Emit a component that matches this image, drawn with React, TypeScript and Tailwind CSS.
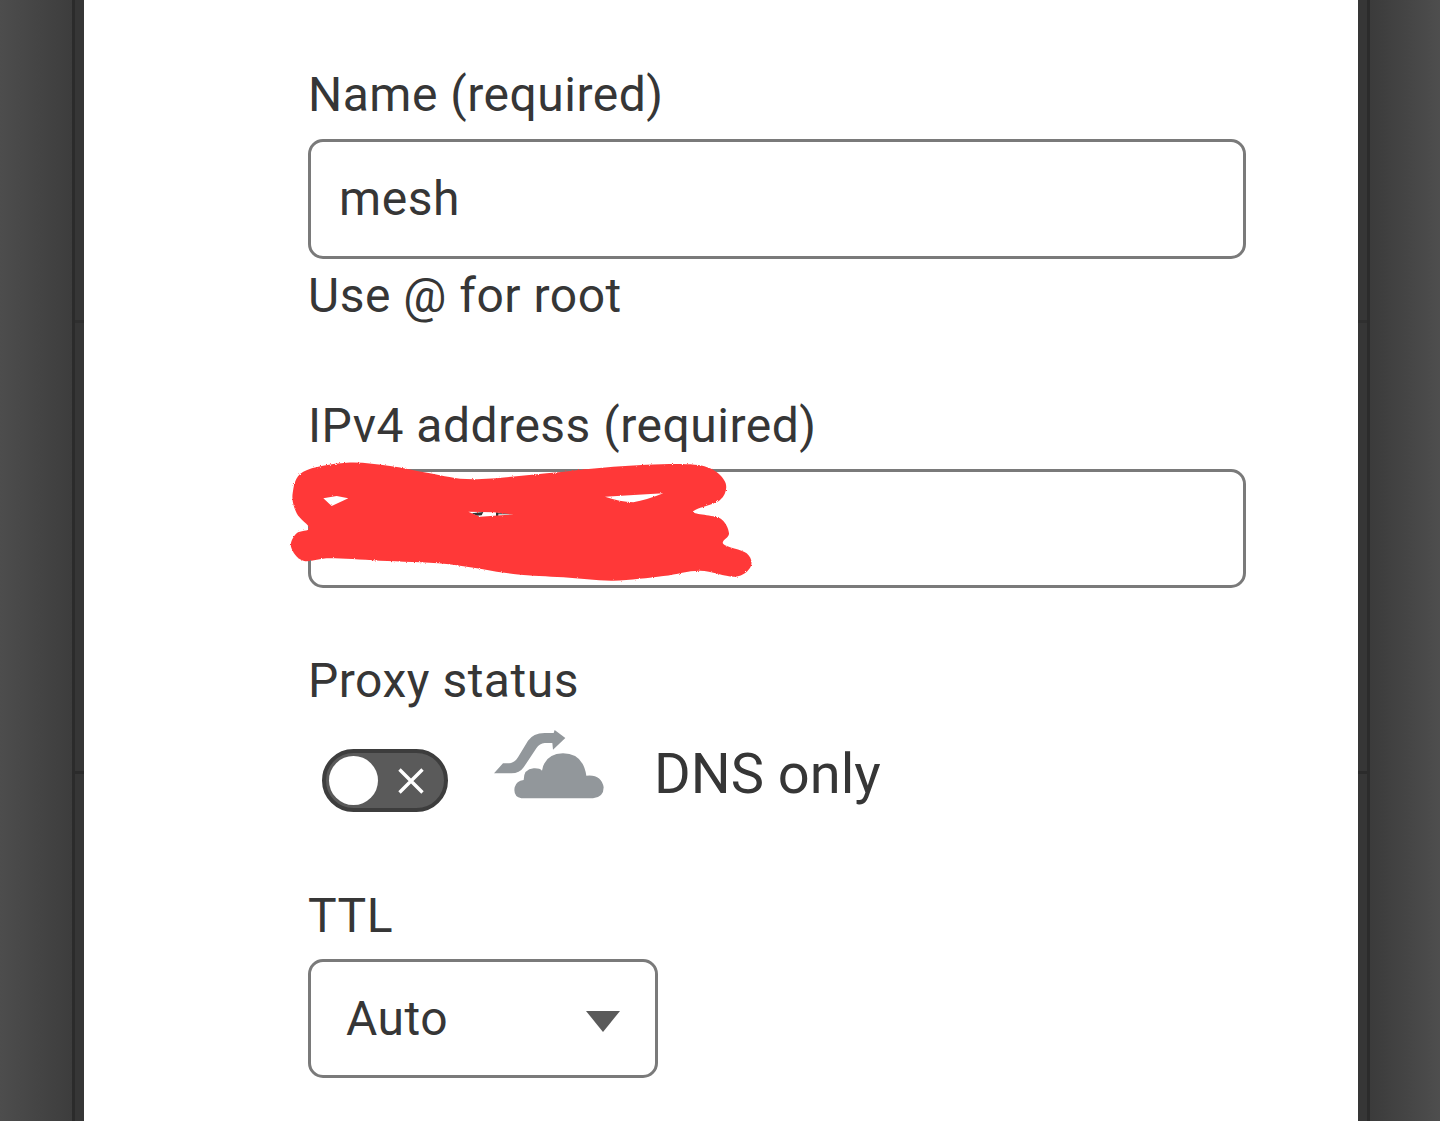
import React from "react";

const pts: number[][] = [[38,130],[70,65],[200,38],[330,48],[450,70],[580,88],[800,70],[1000,50],[1200,42],[1290,55],[1337,100],[1320,150],[1240,185],[1320,205],[1347,250],[1330,282],[1400,310],[1412,350],[1365,380],[1260,362],[1150,378],[1000,392],[850,382],[700,372],[500,342],[300,332],[150,325],[70,332],[33,290],[50,250],[88,235],[50,190]];

function smooth(p: number[][]) {
  const n = p.length;
  let d = `M${p[0][0]} ${p[0][1]}`;
  for (let i = 0; i < n; i++) {
    const a = p[(i - 1 + n) % n], b = p[i], c = p[(i + 1) % n], e = p[(i + 2) % n];
    d += `C${b[0] + (c[0] - a[0]) / 6} ${b[1] + (c[1] - a[1]) / 6} ${c[0] - (e[0] - b[0]) / 6} ${c[1] - (e[1] - b[1]) / 6} ${c[0]} ${c[1]}`;
  }
  return d + "Z";
}

const holes = "M130 145L170 138L205 145L155 168ZM975 140Q1060 135 1150 130Q1100 150 1060 157Q1020 155 975 140ZM565 185L640 187L700 193L600 200Z";

function Scribble() {
  return (
    <svg className="absolute left-[280px] top-[450px]" width="490" height="145" viewBox="0 0 1470 435">
      <defs>
        <filter id="rough" x="-2%" y="-5%" width="104%" height="110%">
          <feTurbulence type="fractalNoise" baseFrequency="0.35" numOctaves="2" seed="3" result="n" />
          <feDisplacementMap in="SourceGraphic" in2="n" scale="7" />
        </filter>
      </defs>
      <path d="M575 190L610 186L605 196L590 197ZM648 187H655V198H648ZM655 190H695V193H655Z" fill="#333333" />
      <path d={smooth(pts) + holes} fill="#ff3939" fillRule="evenodd" filter="url(#rough)" />
    </svg>
  );
}

function Gutter({ side }: { side: "left" | "right" }) {
  const left = side === "left";
  return (
    <div className={`flex ${left ? "w-[84px] flex-row" : "w-[82px] flex-row-reverse"} shrink-0`}>
      <div className={`${left ? "w-[72px] bg-gradient-to-r from-[#4d4d4d] to-[#3d3d3d]" : "w-[70px] bg-gradient-to-l from-[#4e4e4e] to-[#3b3b3b]"} h-full`} />
      <div className="h-full w-[3px] bg-[#2b2b2b]" />
      <div className="flex h-full w-[9px] flex-col bg-[#363636]">
        <div className="h-[320px]" />
        <div className="h-[3px] bg-[#2f2f2f]" />
        <div className="h-[448px]" />
        <div className="h-[3px] bg-[#2b2b2b]" />
      </div>
    </div>
  );
}

const label = "h-[54px] text-[48px] leading-[56px] tracking-[0.5px] text-[#363636]";
const box = "rounded-[15px] border-[3px] border-[#7a7a7a] bg-white";

export default function App() {
  return (
    <div className="relative flex h-[1121px] w-[1440px] overflow-hidden bg-white font-['Roboto',sans-serif] text-[#363636]">
      <Gutter side="left" />
      <main className="flex w-[1274px] shrink-0 flex-col bg-white pl-[224px] pt-[67px]">
        <div className={label}>Name (required)</div>
        <input
          readOnly
          value="mesh"
          className={`${box} mt-[18px] h-[120px] w-[938px] pb-[2px] pl-[28px] text-[48px] tracking-[0.55px] text-[#363636] outline-none`}
        />
        <div className={`${label} mt-[9px]`}>Use @ for root</div>
        <div className={`${label} mt-[76px]`}>IPv4 address (required)</div>
        <div className={`${box} mt-[17px] h-[119px] w-[938px]`} />
        <div className={`${label} mt-[65px]`}>Proxy status</div>
        <div className="relative mt-[23px] flex h-[108px] items-start">
          <div className="ml-[14px] mt-[19px] flex h-[63px] w-[126px] items-center justify-between rounded-full border-[4px] border-[#3d3d3d] bg-[#5a5a5a] pl-[3px] pr-[20px]">
            <div className="h-[49px] w-[49px] rounded-full bg-white" />
            <svg width="26" height="26" viewBox="0 0 26 26" fill="none" stroke="#ffffff" strokeWidth="3.4">
              <path d="M1.5 1.5L24.5 24.5M24.5 1.5L1.5 24.5" />
            </svg>
          </div>
          <svg className="ml-[45px] mt-[-1px]" width="112" height="70" viewBox="580 30 336 210" fill="#92979b">
            <path d="M583 163L610 133H628Q645 132 655 115L685 65Q700 43 735 42L762 42L765 33L797 57L760 92L758 72L735 72Q720 73 710 88L672 145Q660 163 635 163Z" />
            <path d="M665 238Q640 232 645 205Q650 185 672 183Q672 150 702 148Q720 147 727 155Q735 105 790 103Q850 103 860 170Q905 165 912 205Q912 235 880 238Z" />
          </svg>
          <div className="ml-[49px] mt-[12px] text-[56px] leading-[64px]">DNS only</div>
        </div>
        <div className={`${label} mt-[50px]`}>TTL</div>
        <div className={`${box} mt-[17px] flex h-[119px] w-[350px] items-center justify-between pl-[35px] pr-[35px]`}>
          <span className="text-[48px] tracking-[0.5px]">Auto</span>
          <svg className="mt-[5px]" width="34" height="21" viewBox="0 0 34 21" fill="#5a5a5a">
            <path d="M0 0H34L17 21Z" />
          </svg>
        </div>
      </main>
      <Gutter side="right" />
      <div className="h-full w-[12px] shrink-0 bg-[#686868]" />
      <Scribble />
    </div>
  );
}
